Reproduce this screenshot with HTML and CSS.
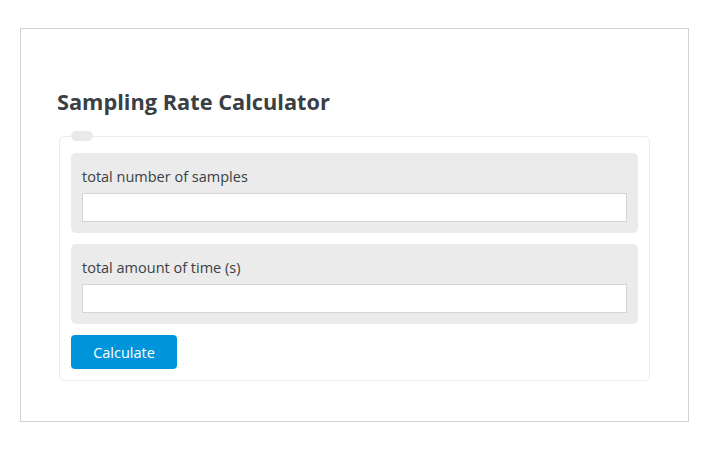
FILE: index.html
```html
<!DOCTYPE html>
<html lang="en">
<head>
<meta charset="utf-8">
<title>Sampling Rate Calculator</title>
<link rel="stylesheet" href="styles.css">
</head>
<body>
<div class="card">
  <h2 class="title">Sampling Rate Calculator</h2>
  <form class="calc">
    <fieldset class="calc-set">
      <legend class="calc-legend"></legend>
      <div class="field">
        <label class="field-label" for="samples">total number of samples</label>
        <input class="field-input" id="samples" type="text">
      </div>
      <div class="field">
        <label class="field-label" for="time">total amount of time (s)</label>
        <input class="field-input" id="time" type="text">
      </div>
      <button class="btn" type="button">Calculate</button>
    </fieldset>
  </form>
</div>
</body>
</html>
```
FILE: styles.css
```css
html, body {
  margin: 0;
  background: #ffffff;
}

body {
  font-family: "Open Sans", "Noto Sans", sans-serif;
  color: #3a3f44;
  padding: 28px 0 0 20px;
}

.card {
  box-sizing: border-box;
  width: 669px;
  height: 394px;
  border: 1px solid #d2d2d2;
  padding: 58px 36px 0 36px;
}

.title {
  margin: 0 0 14px;
  font-size: 21.75px;
  line-height: 30px;
  font-weight: 700;
  color: #3a3f44;
}

.calc {
  margin: 0;
}

.calc-set {
  margin: 0 2px;
  padding: 12px 11px 11px;
  border: 1px solid #ebebeb;
  border-radius: 5px;
  display: flex;
  flex-direction: column;
  gap: 11px;
}

.calc-legend {
  width: 22px;
  height: 10px;
  padding: 0;
  background: #e8e9e8;
  border-radius: 5px;
}

.field {
  background: #eaebea;
  border-radius: 5px;
  padding: 14px 11px 11px;
  display: flex;
  flex-direction: column;
}

.field-label {
  font-size: 14.5px;
  line-height: 20px;
  margin-bottom: 6px;
  color: #3a3f44;
}

.field-input {
  box-sizing: border-box;
  height: 29px;
  width: 100%;
  margin: 0;
  border: 1px solid #d5d5d5;
  background: #ffffff;
  font: inherit;
}

.btn {
  align-self: flex-start;
  width: 106px;
  height: 34px;
  border: 0;
  border-radius: 4px;
  background: #0095da;
  color: #ffffff;
  font-family: inherit;
  font-size: 14.5px;
  padding: 0;
}
```
